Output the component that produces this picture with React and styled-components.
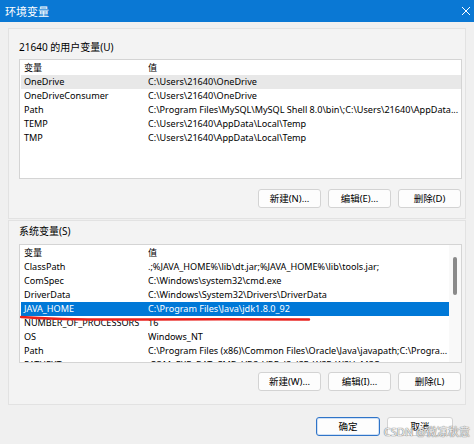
import React from 'react';
import styled, { createGlobalStyle } from 'styled-components';

const Global = createGlobalStyle`
  html, body { margin: 0; padding: 0; background: #f0f0f0; }
  body { font-family: "Noto Sans", "Noto Sans CJK SC", sans-serif; color: #000; }
  * { box-sizing: border-box; }
`;

const Window = styled.div`
  position: relative;
  width: 474px;
  height: 444px;
  overflow: hidden;
  background: #f0f0f0;
  display: flex;
  flex-direction: column;
`;

const TitleBar = styled.div`
  flex: none;
  height: 22px;
  background: #0a78d4;
  color: #fff;
  display: flex;
  align-items: center;
  justify-content: space-between;
  padding: 0 3px 0 5px;
  font-size: 11px;
  font-family: "Noto Sans CJK SC", sans-serif;
`;

const Body = styled.div`
  display: flex;
  flex-direction: column;
  padding: 6px 8px 0 8px;
`;

const Group = styled.div`
  display: flex;
  flex-direction: column;
  margin-top: ${p => p.$mt || 0}px;
  padding: ${p => p.$pt}px 3px ${p => p.$pb}px 10px;
  border: 1px solid #e2e2e2;
  background: #f3f3f3;
`;

const GroupLabel = styled.div`
  height: 14px;
  line-height: 14px;
  font-size: 10px;
  font-family: "Noto Sans", "Noto Sans CJK SC", sans-serif;
`;

const ListBox = styled.div`
  position: relative;
  margin-top: ${p => p.$mt}px;
  height: ${p => p.$h}px;
  background: #fff;
  border: 1px solid #d4d4d4;
  display: flex;
  overflow: hidden;
`;

const Table = styled.div`
  flex: 1;
  min-width: 0;
  display: flex;
  flex-direction: column;
  padding-left: 1px;
`;

const Row = styled.div`
  flex: none;
  display: flex;
  height: ${p => (p.$header ? 15 : 14)}px;
  line-height: ${p => (p.$header ? 15 : 14)}px;
  font-size: 9.1px;
  white-space: nowrap;
  background: ${p => (p.$selected ? '#0078d7' : p.$hover ? '#e8e8e8' : 'transparent')};
  color: ${p => (p.$selected ? '#fff' : '#000')};
`;

const NameCell = styled.div`
  flex: none;
  width: 127px;
  padding-left: 3px;
  overflow: hidden;
`;

const ValueCell = styled.div`
  flex: 1;
  min-width: 0;
  overflow: hidden;
`;

const ScrollTrack = styled.div`
  flex: none;
  width: 12px;
  background: #f9f9f9;
  position: relative;
`;

const ScrollThumb = styled.div`
  position: absolute;
  left: 4px;
  top: 12px;
  width: 4px;
  height: 38px;
  border-radius: 2px;
  background: #8a8a8a;
`;

const ButtonRow = styled.div`
  display: flex;
  justify-content: flex-end;
  gap: 7px;
  margin-top: ${p => p.$mt}px;
  margin-right: 1px;
`;

const Button = styled.button`
  width: ${p => p.$w || 63}px;
  height: 19px;
  padding: 0;
  font-size: 9.5px;
  font-family: "Noto Sans", "Noto Sans CJK SC", sans-serif;
  color: #000;
  background: #fdfdfd;
  border: 1px solid ${p => (p.$primary ? '#2f74c8' : '#d3d3d3')};
  box-shadow: ${p => (p.$primary ? 'inset 0 0 0 1px #cfe0f5' : 'none')};
  border-radius: 3px;
  line-height: 17px;
`;

const Footer = styled.div`
  display: flex;
  justify-content: flex-end;
  gap: 7px;
  margin-top: 12px;
  padding-right: 13px;
`;

const Mark = styled.svg`
  position: absolute;
  left: 0;
  top: 0;
  pointer-events: none;
`;

const Watermark = styled.div`
  position: absolute;
  right: 4px;
  bottom: 5px;
  font-size: 11px;
  font-family: "Noto Sans", "Noto Sans CJK SC", sans-serif;
  color: rgba(255, 255, 255, 0.9);
  text-shadow: 0 0 1px #6a6a6a, 0 0 1px #6a6a6a;
`;

const userVars = [
  ['OneDrive', 'C:\\Users\\21640\\OneDrive'],
  ['OneDriveConsumer', 'C:\\Users\\21640\\OneDrive'],
  ['Path', 'C:\\Program Files\\MySQL\\MySQL Shell 8.0\\bin\\;C:\\Users\\21640\\AppData...'],
  ['TEMP', 'C:\\Users\\21640\\AppData\\Local\\Temp'],
  ['TMP', 'C:\\Users\\21640\\AppData\\Local\\Temp'],
];

const sysVars = [
  ['ClassPath', '.;%JAVA_HOME%\\lib\\dt.jar;%JAVA_HOME%\\lib\\tools.jar;'],
  ['ComSpec', 'C:\\Windows\\system32\\cmd.exe'],
  ['DriverData', 'C:\\Windows\\System32\\Drivers\\DriverData'],
  ['JAVA_HOME', 'C:\\Program Files\\Java\\jdk1.8.0_92'],
  ['NUMBER_OF_PROCESSORS', '16'],
  ['OS', 'Windows_NT'],
  ['Path', 'C:\\Program Files (x86)\\Common Files\\Oracle\\Java\\javapath;C:\\Progra...'],
  ['PATHEXT', '.COM;.EXE;.BAT;.CMD;.VBS;.VBE;.JS;.JSE;.WSF;.WSH;.MSC'],
];

function VarTable({ rows, hoverIndex, selectedIndex }) {
  return (
    <Table>
      <Row $header>
        <NameCell>变量</NameCell>
        <ValueCell>值</ValueCell>
      </Row>
      {rows.map(([n, v], i) => (
        <Row key={n + i} $hover={i === hoverIndex} $selected={i === selectedIndex}>
          <NameCell>{n}</NameCell>
          <ValueCell>{v}</ValueCell>
        </Row>
      ))}
    </Table>
  );
}

export default function App() {
  return (
    <>
      <Global />
      <Window>
        <TitleBar>
          <span>环境变量</span>
          <svg width="10" height="10" viewBox="0 0 10 10">
            <path d="M1 1 L9 9 M9 1 L1 9" stroke="#fff" strokeWidth="1" />
          </svg>
        </TitleBar>
        <Body>
          <Group $pt={11} $pb={10}>
            <GroupLabel>21640 的用户变量(U)</GroupLabel>
            <ListBox $mt={5} $h={120}>
              <VarTable rows={userVars} hoverIndex={0} />
            </ListBox>
            <ButtonRow $mt={10}>
              <Button>新建(N)...</Button>
              <Button>编辑(E)...</Button>
              <Button>删除(D)</Button>
            </ButtonRow>
          </Group>
          <Group $mt={1} $pt={3} $pb={13}>
            <GroupLabel>系统变量(S)</GroupLabel>
            <ListBox $mt={6} $h={119}>
              <VarTable rows={sysVars} selectedIndex={3} />
              <ScrollTrack>
                <ScrollThumb />
              </ScrollTrack>
              <Mark width="300" height="90" viewBox="0 0 300 90">
                <path
                  d="M1 72 Q 40 75 120 74.5 T 289 74.5"
                  fill="none"
                  stroke="#e8211d"
                  strokeWidth="2.4"
                  strokeLinecap="round"
                />
              </Mark>
            </ListBox>
            <ButtonRow $mt={9}>
              <Button>新建(W)...</Button>
              <Button>编辑(I)...</Button>
              <Button>删除(L)</Button>
            </ButtonRow>
          </Group>
          <Footer>
            <Button $w={64} $primary>确定</Button>
            <Button $w={66}>取消</Button>
          </Footer>
        </Body>
        <Watermark>CSDN @微凉秋意</Watermark>
      </Window>
    </>
  );
}
